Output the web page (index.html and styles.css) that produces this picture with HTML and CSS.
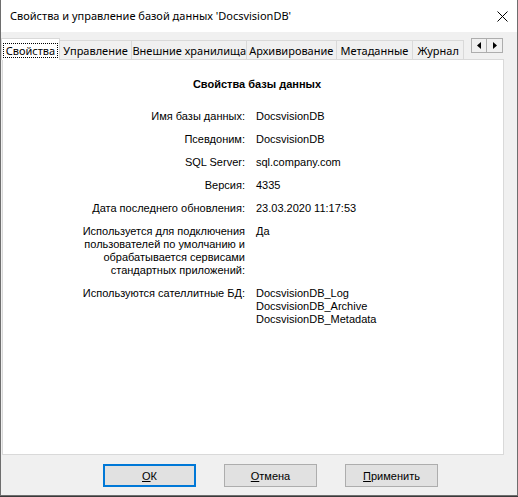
FILE: index.html
```html
<!DOCTYPE html>
<html lang="ru">
<head>
<meta charset="utf-8">
<title>Свойства базы данных</title>
<link rel="stylesheet" href="styles.css">
</head>
<body>
<div class="window">
  <div class="titlebar">
    <span class="title">Свойства и управление базой данных 'DocsvisionDB'</span>
    <span class="close">
      <svg width="11" height="11" viewBox="0 0 11 11"><path d="M0.5 0.5 L10.5 10.5 M10.5 0.5 L0.5 10.5" stroke="#000" stroke-width="1" fill="none"/></svg>
    </span>
  </div>
  <div class="client">
    <div class="tabs">
      <div class="tab selected"><span class="focus">Свойства</span></div>
      <div class="tab w-upr">Управление</div>
      <div class="tab w-ext">Внешние хранилища</div>
      <div class="tab w-arch">Архивирование</div>
      <div class="tab w-meta">Метаданные</div>
      <div class="tab w-log">Журнал</div>
      <div class="scroller">
        <span class="arrow"><svg width="4" height="7" viewBox="0 0 4 7"><path d="M4 0 L0 3.5 L4 7 Z" fill="#000"/></svg></span>
        <span class="arrow"><svg width="4" height="7" viewBox="0 0 4 7"><path d="M0 0 L4 3.5 L0 7 Z" fill="#000"/></svg></span>
      </div>
    </div>
    <div class="panel">
      <h1 class="heading">Свойства базы данных</h1>
      <div class="props">
        <div class="label">Имя базы данных:</div><div class="value">DocsvisionDB</div>
        <div class="label">Псевдоним:</div><div class="value">DocsvisionDB</div>
        <div class="label">SQL Server:</div><div class="value">sql.company.com</div>
        <div class="label">Версия:</div><div class="value">4335</div>
        <div class="label">Дата последнего обновления:</div><div class="value">23.03.2020 11:17:53</div>
        <div class="label">Используется для подключения<br>пользователей по умолчанию и<br>обрабатывается сервисами<br>стандартных приложений:</div><div class="value">Да</div>
        <div class="label">Используются сателлитные БД:</div><div class="value">DocsvisionDB_Log<br>DocsvisionDB_Archive<br>DocsvisionDB_Metadata</div>
      </div>
    </div>
    <div class="buttons">
      <button class="btn default"><u>О</u>К</button>
      <button class="btn"><u>О</u>тмена</button>
      <button class="btn"><u>П</u>рименить</button>
    </div>
  </div>
</div>
</body>
</html>
```

FILE: styles.css
```css
html, body {
  margin: 0;
  padding: 0;
  background: #3a3a3a;
}
.window {
  width: 516px;
  height: 495px;
  border: 1px solid #6e6e6e;
  border-top: none;
  background: #f0f0f0;
  display: flex;
  flex-direction: column;
  overflow: hidden;
}
.titlebar {
  height: 32px;
  background: #ffffff;
  display: flex;
  align-items: center;
  justify-content: space-between;
  padding: 0 9px 0 9px;
  flex: none;
}
.title {
  font-family: "Noto Sans", "Liberation Sans", sans-serif;
  font-size: 11px;
  color: #000;
  margin-top: -1px;
}
.close {
  display: flex;
}
.client {
  flex: 1;
  display: flex;
  flex-direction: column;
  padding: 6px 14px 0 0;
}
.tabs {
  display: flex;
  align-items: flex-end;
  height: 21px;
  font-family: "Noto Sans", "Liberation Sans", sans-serif;
  font-size: 11px;
  position: relative;
  z-index: 1;
}
.tab {
  box-sizing: border-box;
  height: 19px;
  border: 1px solid #d9d9d9;
  border-bottom: none;
  margin-left: -1px;
  background: #f0f0f0;
  display: flex;
  align-items: center;
  justify-content: center;
  color: #000;
  white-space: nowrap;
  padding-top: 1px;
}
.tab.selected {
  width: 59px;
  height: 22px;
  margin-left: 0;
  margin-bottom: -1px;
  background: #ffffff;
  padding: 3px 1px 2px 1px;
  align-items: stretch;
  z-index: 2;
}
.focus {
  flex: 1;
  display: flex;
  align-items: center;
  justify-content: center;
  border: 1px dotted #000;
  margin-top: 1px;
}
.w-upr { width: 74px; }
.w-ext { width: 116px; }
.w-arch { width: 91px; }
.w-meta { width: 78px; }
.w-log { width: 52px; }
.scroller {
  display: flex;
  margin-left: 7px;
  align-self: flex-start;
}
.arrow {
  box-sizing: border-box;
  width: 16px;
  height: 15px;
  border: 1px solid #adadad;
  background: #f0f0f0;
  display: flex;
  align-items: center;
  justify-content: center;
}
.arrow + .arrow {
  margin-left: -1px;
  width: 17px;
}
.panel {
  box-sizing: border-box;
  width: 502px;
  height: 396px;
  margin-left: 1px;
  background: #ffffff;
  border: 1px solid #d9d9d9;
  padding-top: 18px;
  font-family: "Liberation Sans", Arial, sans-serif;
  font-size: 11px;
  line-height: 13px;
  color: #000;
}
.heading {
  margin: 0 0 19px 0;
  font-size: 11px;
  font-weight: bold;
  text-align: center;
  line-height: 13px;
  padding-left: 8px;
}
.props {
  display: grid;
  grid-template-columns: 242px 1fr;
  column-gap: 11px;
  row-gap: 10px;
}
.label {
  text-align: right;
}
.buttons {
  display: flex;
  gap: 28px;
  padding: 9px 0 0 102px;
}
.btn {
  box-sizing: border-box;
  width: 93px;
  height: 23px;
  background: #e1e1e1;
  border: 1px solid #adadad;
  font-family: "Liberation Sans", Arial, sans-serif;
  font-size: 11px;
  color: #000;
  padding: 0;
  margin: 0;
}
.btn.default {
  border: 2px solid #0078d7;
}
```
